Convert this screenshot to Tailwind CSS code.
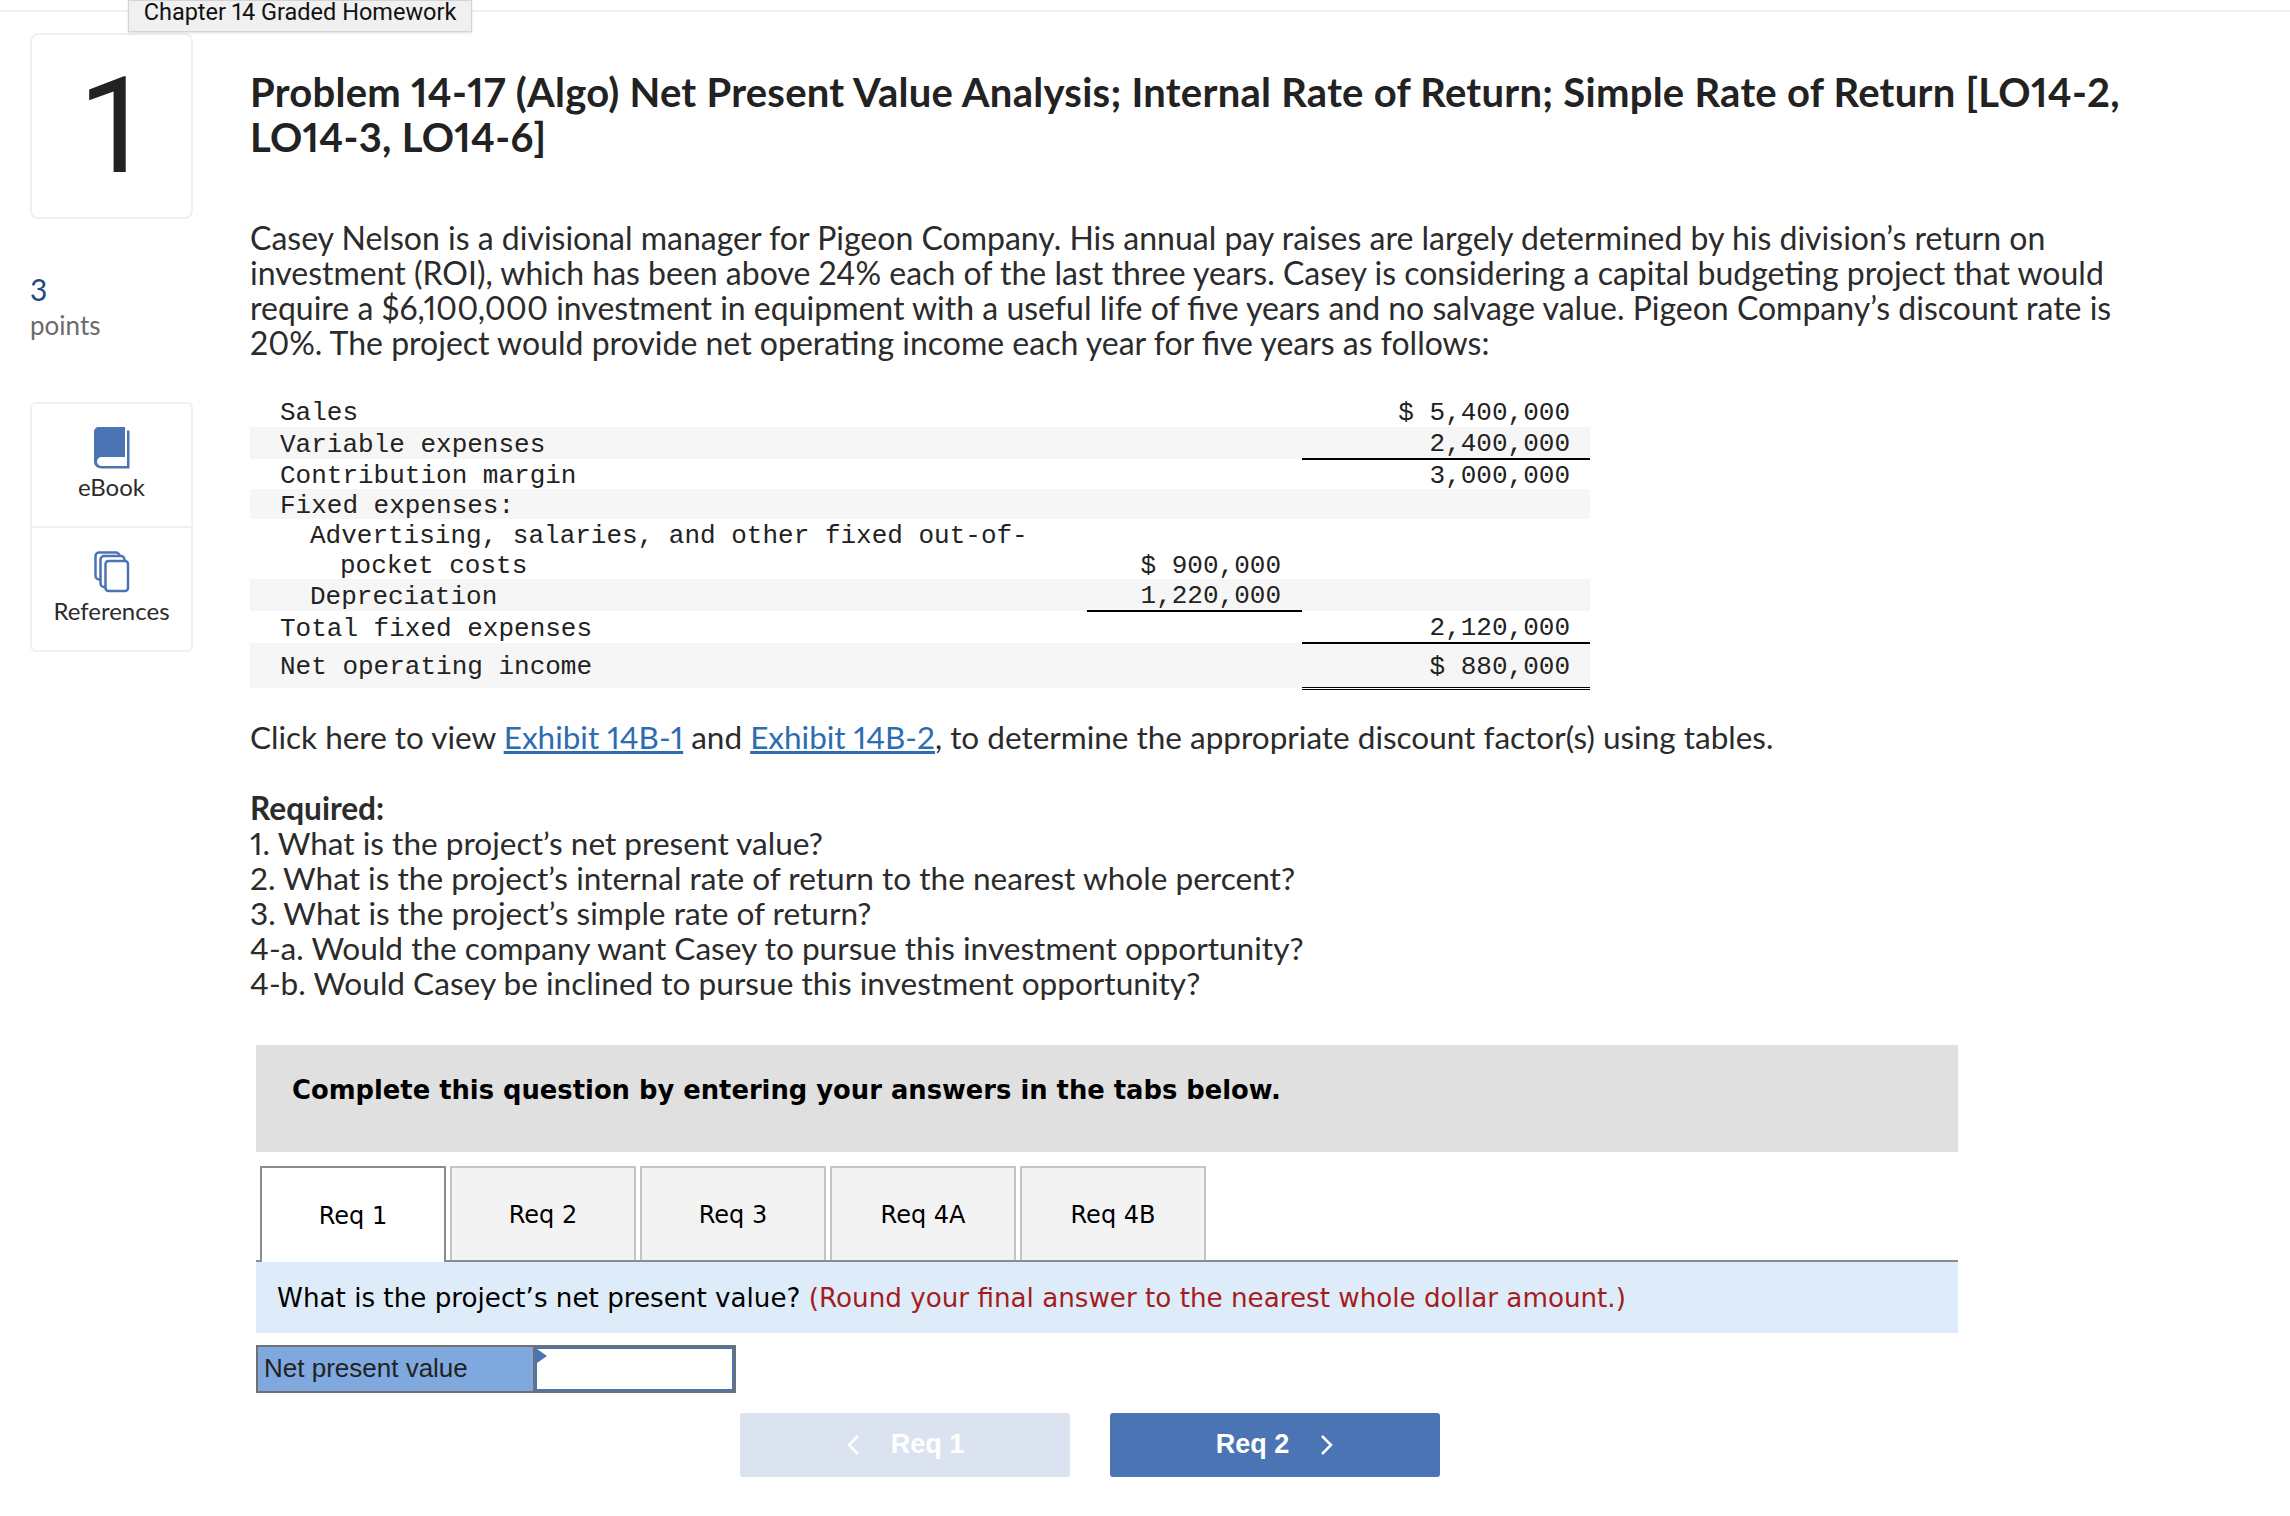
<!DOCTYPE html>
<html lang="en">

<head>
    <meta charset="UTF-8">
    <title>Chapter 14 Graded Homework</title>
    <script src="https://cdn.jsdelivr.net/npm/@tailwindcss/browser@4"></script>
</head>

<body class="bg-white w-[2290px] h-[1516px] overflow-hidden font-['Lato',sans-serif] text-[#2b2b2b] proportional-nums">
    <!-- Top bar with chapter tab -->
    <div class="relative h-[12px] border-b-2 border-[#f0f0f0]">
        <div class="absolute left-[128px] top-0 w-[344px] h-[32px] bg-[#f0f0f0] border border-[#d4d4d4] shadow-sm flex items-center justify-center pb-[8px] text-[23.5px] leading-[24px] text-[#111] font-['Roboto',sans-serif]">Chapter 14 Graded Homework</div>
    </div>

    <div class="flex pt-[21px]">
        <!-- Left column -->
        <div class="ml-[30px] w-[163px] shrink-0">
            <div class="h-[186px] border-2 border-[#f0f0f0] rounded-lg flex justify-center pl-[2px]">
                <span class="font-['Roboto',sans-serif] text-[134px] leading-[184px] text-[#222]">1</span>
            </div>
            <div class="mt-[52px] text-[30px] leading-[36px] text-[#1f4a87]">3</div>
            <div class="text-[26px] leading-[36px] text-[#6b6b6b]">points</div>
            <div class="mt-[59px] border-2 border-[#f0f0f0] rounded-md text-[24px] text-[#2b2b2b]">
                <div class="h-[124px] border-b-2 border-[#f0f0f0] flex flex-col items-center pt-[23px]">
                    <svg width="36" height="42" viewBox="0 0 36 42" fill="#4a74b4">
                        <path d="M5 0H31V30H8C5 30 3 32 3 34.5C3 37 5 39 8 39H33V3.5H35.5V41.5H8C3 41.5 0 38.5 0 34.5V5C0 2 2 0 5 0Z" />
                    </svg>
                    <span class="mt-[2px] leading-[32px]">eBook</span>
                </div>
                <div class="h-[122px] flex flex-col items-center pt-[23px]">
                    <svg width="36" height="42" viewBox="0 0 36 42" fill="#fff" stroke="#4a74b4" stroke-width="2.5">
                        <rect x="1.5" y="1.5" width="24" height="27" rx="3.5" />
                        <rect x="6.5" y="5" width="24" height="31" rx="3.5" />
                        <rect x="11.5" y="10" width="22.5" height="30" rx="3" />
                    </svg>
                    <span class="mt-[2px] leading-[32px]">References</span>
                </div>
            </div>
        </div>

        <!-- Question -->
        <div class="ml-[57px] w-[2000px]">
            <h1 class="mt-[37px] w-[1900px] text-[40px] leading-[45px] font-bold tracking-[0.26px] text-[#222]">Problem 14-17 (Algo) Net Present Value Analysis; Internal Rate of Return; Simple Rate of Return [LO14-2, LO14-3, LO14-6]</h1>

            <p class="mt-[60px] w-[1870px] text-[32px] leading-[35px]">Casey Nelson is a divisional manager for Pigeon Company. His annual pay raises are largely determined by his division’s return on investment (ROI), which has been above 24% each of the last three years. Casey is considering a capital budgeting project that would require a $6,100,000 investment in equipment with a useful life of five years and no salvage value. Pigeon Company’s discount rate is 20%. The project would provide net operating income each year for five years as follows:</p>

            <table class="mt-[35px] w-[1340px] table-fixed border-collapse font-['Liberation_Mono',monospace] text-[26px] leading-[26px] text-[#222] [&_td]:pt-[3px] [&_td]:pb-0">
                <colgroup>
                    <col class="w-[837px]">
                    <col class="w-[215px]">
                    <col class="w-[288px]">
                </colgroup>
                <tbody>
                    <tr class="h-[32px]">
                        <td class="pl-[30px]">Sales</td><td></td><td class="pr-[20px] text-right">$ 5,400,000</td>
                    </tr>
                    <tr class="h-[32px] bg-[#f6f6f6]">
                        <td class="pl-[30px]">Variable expenses</td><td></td><td class="pr-[20px] text-right border-b-2 border-black">2,400,000</td>
                    </tr>
                    <tr class="h-[30px]">
                        <td class="pl-[30px]">Contribution margin</td><td></td><td class="pr-[20px] text-right">3,000,000</td>
                    </tr>
                    <tr class="h-[30px] bg-[#f6f6f6]">
                        <td class="pl-[30px]">Fixed expenses:</td><td></td><td></td>
                    </tr>
                    <tr class="h-[30px]">
                        <td class="pl-[60px] whitespace-nowrap">Advertising, salaries, and other fixed out-of-</td><td></td><td></td>
                    </tr>
                    <tr class="h-[30px]">
                        <td class="pl-[90px]">pocket costs</td><td class="pr-[21px] text-right">$ 900,000</td><td></td>
                    </tr>
                    <tr class="h-[32px] bg-[#f6f6f6]">
                        <td class="pl-[60px]">Depreciation</td><td class="pr-[21px] text-right border-b-2 border-black">1,220,000</td><td></td>
                    </tr>
                    <tr class="h-[32px]">
                        <td class="pl-[30px]">Total fixed expenses</td><td></td><td class="pr-[20px] text-right border-b-2 border-black">2,120,000</td>
                    </tr>
                    <tr class="h-[45px] bg-[#f6f6f6]">
                        <td class="pl-[30px]">Net operating income</td><td></td><td class="pr-[20px] text-right border-b-[3px] border-double border-black">$ 880,000</td>
                    </tr>
                </tbody>
            </table>

            <p class="mt-[30px] text-[31.5px] leading-[35px]">Click here to view <a class="text-[#2c6cb0] underline">Exhibit 14B-1</a> and <a class="text-[#2c6cb0] underline">Exhibit 14B-2</a>, to determine the appropriate discount factor(s) using tables.</p>

            <div class="mt-[36px] text-[31.6px] leading-[35px]">
                <div class="font-bold">Required:</div>
                <div>1. What is the project’s net present value?</div>
                <div>2. What is the project’s internal rate of return to the nearest whole percent?</div>
                <div>3. What is the project’s simple rate of return?</div>
                <div>4-a. Would the company want Casey to pursue this investment opportunity?</div>
                <div>4-b. Would Casey be inclined to pursue this investment opportunity?</div>
            </div>

            <!-- Answer area -->
            <div class="mt-[44px] ml-[6px] w-[1702px] font-['DejaVu_Sans',sans-serif] text-black">
                <div class="h-[107px] bg-[#e0e0e0] pl-[36px] pt-[28px] text-[25.8px] leading-[34px] font-bold">Complete this question by entering your answers in the tabs below.</div>

                <div class="mt-[14px] h-[96px] border-b-2 border-[#8c8c8c] flex gap-[4px] pl-[4px] text-[24px]">
                    <div class="w-[186px] h-[96px] pt-[3px] bg-white border-2 border-b-0 border-[#8c8c8c] flex items-center justify-center">Req 1</div>
                    <div class="w-[186px] h-[94px] pt-[3px] bg-[#f3f3f3] border-2 border-b-0 border-[#c4c4c4] flex items-center justify-center">Req 2</div>
                    <div class="w-[186px] h-[94px] pt-[3px] bg-[#f3f3f3] border-2 border-b-0 border-[#c4c4c4] flex items-center justify-center">Req 3</div>
                    <div class="w-[186px] h-[94px] pt-[3px] bg-[#f3f3f3] border-2 border-b-0 border-[#c4c4c4] flex items-center justify-center">Req 4A</div>
                    <div class="w-[186px] h-[94px] pt-[3px] bg-[#f3f3f3] border-2 border-b-0 border-[#c4c4c4] flex items-center justify-center">Req 4B</div>
                </div>

                <div class="h-[71px] bg-[#deecf9] pl-[21px] pt-[4px] flex items-center text-[26.2px]">
                    <span>What is the project’s net present value? <span class="text-[#a51c1c]">(Round your final answer to the nearest whole dollar amount.)</span></span>
                </div>

                <div class="mt-[12px] w-[480px] h-[48px] border-2 border-[#707070] flex font-['Liberation_Sans',sans-serif] text-[26px] text-[#222]">
                    <div class="w-[277px] bg-[#7fa9de] border-r-2 border-[#707070] pl-[6px] flex items-center">Net present value</div>
                    <div class="relative flex-1 bg-white border-2 border-[#4a74b4]">
                        <svg class="absolute left-0 top-0" width="10" height="14" viewBox="0 0 10 14"><path d="M0 0L10 7L0 14Z" fill="#4a74b4" /></svg>
                    </div>
                </div>

                <div class="mt-[20px] ml-[484px] flex gap-[40px] font-['Liberation_Sans',sans-serif] text-[27px] font-bold text-white">
                    <button class="w-[330px] h-[64px] bg-[#dae3ef] rounded-[3px] flex items-center justify-center gap-[31px]">
                        <svg width="14" height="22" viewBox="0 0 14 22" fill="none" stroke="#fff" stroke-width="2.5"><path d="M12 2L3 11L12 20" /></svg>
                        Req 1
                    </button>
                    <button class="w-[330px] h-[64px] bg-[#4a74b4] rounded-[3px] flex items-center justify-center gap-[31px]">
                        Req 2
                        <svg width="14" height="22" viewBox="0 0 14 22" fill="none" stroke="#fff" stroke-width="2.5"><path d="M2 2L11 11L2 20" /></svg>
                    </button>
                </div>
            </div>
        </div>
    </div>
</body>

</html>
